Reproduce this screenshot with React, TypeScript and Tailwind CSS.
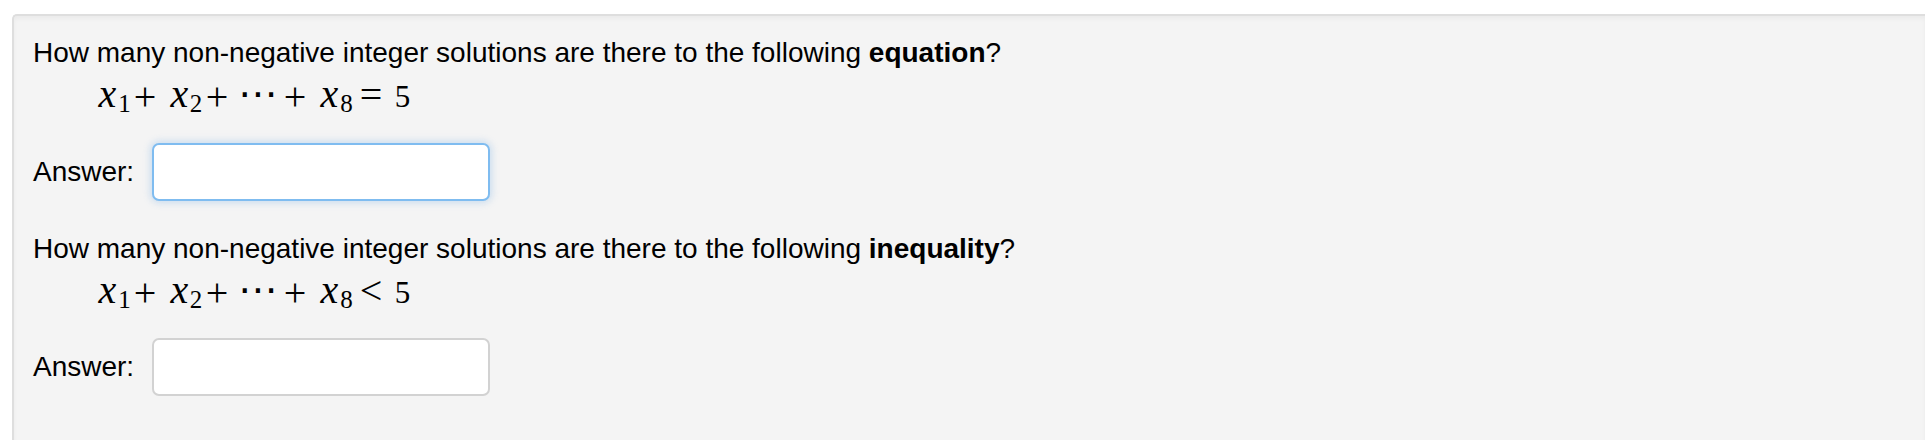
import React from 'react'

// Hand-set math line, spaced to look like the KaTeX output in the original
function Token({ w, ml = 0, className = '', children }: { w: number; ml?: number; className?: string; children: React.ReactNode }) {
  return (
    <span className={`inline-flex justify-center leading-none ${className}`} style={{ width: w, marginLeft: ml }}>
      {children}
    </span>
  )
}

function Var({ w, ml = 0 }: { w: number; ml?: number }) {
  return (
    <span
      className="inline-block text-center font-['Liberation_Serif',serif] text-[40px] italic leading-none"
      style={{ width: w, marginLeft: ml }}
    >
      x
    </span>
  )
}

const SUB = "font-['Liberation_Serif',serif] text-[25px] align-[-5px]"
const OP = "font-['Liberation_Serif',serif] text-[40px] align-[-3px]"
const REL = "font-['Liberation_Serif',serif] text-[40px] align-[-1px]"
const NUM = "font-['Liberation_Serif',serif] text-[31px]"

function Sum({ rel }: { rel: string }) {
  return (
    <div className="ml-[62px] h-[42px] whitespace-nowrap">
      <Var w={25} />
      <Token w={9} className={SUB}>1</Token>
      <Token w={18} ml={7} className={OP}>+</Token>
      <Var w={25} ml={13} />
      <Token w={8} className={SUB}>2</Token>
      <Token w={20} ml={7} className={OP}>+</Token>
      <Token w={31} ml={15} className="font-['DejaVu_Sans',sans-serif] text-[39px]">⋯</Token>
      <Token w={20} ml={12} className={OP}>+</Token>
      <Var w={25} ml={12} />
      <Token w={9} className={SUB}>8</Token>
      <Token w={22} ml={9} className={REL}>{rel}</Token>
      <Token w={11} ml={15} className={NUM}>5</Token>
    </div>
  )
}

function AnswerRow({ focused }: { focused?: boolean }) {
  return (
    <div className="flex items-center gap-[18px]">
      <span>Answer:</span>
      <input
        type="text"
        className={`h-[58px] w-[338px] rounded-[7px] bg-white px-3 outline-none ${
          focused
            ? 'border-2 border-[#7fbcf0] shadow-[0_0_7px_2px_rgba(110,170,230,0.3)]'
            : 'border-2 border-[#d2d2d2]'
        }`}
      />
    </div>
  )
}

export default function App() {
  return (
    <div className="h-[440px] overflow-hidden bg-white pl-[12px] pt-[14px] font-['Liberation_Sans',Arial,sans-serif] text-[28px] leading-[42px] text-black">
      <div className="min-h-[440px] rounded-tl-[5px] border-l-2 border-t-2 border-[#dedede] bg-[#f4f4f4] pl-[19px] pt-[16px] shadow-[inset_0_3px_4px_rgba(0,0,0,0.04)]">
        <p>
          How many non-negative integer solutions are there to the following <b>equation</b>?
        </p>
        <Sum rel="=" />

        <div className="mt-[27px]">
          <AnswerRow focused />
        </div>

        <p className="mt-[27px]">
          How many non-negative integer solutions are there to the following <b>inequality</b>?
        </p>
        <Sum rel="<" />

        <div className="mt-[26px]">
          <AnswerRow />
        </div>
      </div>
    </div>
  )
}
